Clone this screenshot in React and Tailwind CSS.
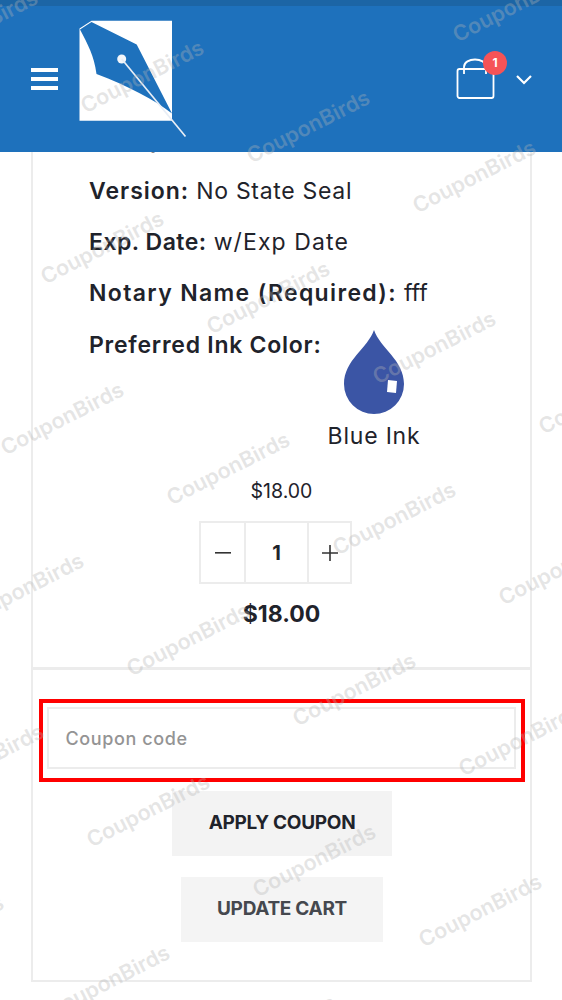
const F = { fontFamily: '"Inter","Noto Sans",sans-serif' };

const MARKS = [];
for (let i = -3; i < 6; i++) {
  for (let j = -2; j < 6; j++) {
    const x = 102 + i * 166 - j * 40;
    const y = 245 + i * 50 + j * 171;
    if (x > -90 && x < 650 && y > -40 && y < 1040) MARKS.push([x, y]);
  }
}

function Row({ label, value, labelClass, valueClass }) {
  return (
    <div className="h-[51px] flex items-center text-[23px] text-[#1f232b] whitespace-nowrap">
      <span className={"font-semibold mr-[7px] " + labelClass}>{label}</span>
      <span className={valueClass}>{value}</span>
    </div>
  );
}

export default function App() {
  return (
    <div className="relative w-[562px] h-[1000px] overflow-hidden bg-white" style={F}>
      <header className="absolute top-0 left-0 right-0 h-[152px] z-10 bg-[#1e71bc] border-t-[6px] border-[#1c65a5] flex items-center justify-between pl-[31px] pr-[29px]">
        <div className="flex items-center">
          <div className="w-[27px] flex flex-col gap-[5px] mt-[-1px]">
            <div className="h-[4px] bg-white" />
            <div className="h-[4px] bg-white" />
            <div className="h-[4px] bg-white" />
          </div>
          <svg className="ml-[21px]" width="110" height="118" viewBox="79 20 110 118">
            <path d="M79.5 28.5 L91.5 20.7 H172 V120.7 H79.5 Z" fill="#fff" />
            <path d="M80 29.5 L91.5 22 L136.7 44.5 L172 113.5 C155 100 128 86 96.5 74 C94 55 88 45 80 29.5 Z" fill="#1e71bc" />
            <circle cx="121.7" cy="59" r="4.5" fill="#f3f6fa" />
            <path d="M121.7 59 L185.5 136.5" stroke="#e8eef6" strokeWidth="1.7" fill="none" />
          </svg>
        </div>
        <div className="flex items-center">
          <div className="relative w-[40px] h-[46px] mt-[-4px]">
            <svg width="40" height="46" viewBox="0 0 40 46" fill="none" stroke="#fff" strokeWidth="1.8">
              <rect x="1.5" y="15" width="36" height="29" rx="2" />
              <path d="M8 20 V13 C8 3 30 3 30 13 V20" />
            </svg>
            <div className="absolute top-[-3px] left-[27px] w-[24px] h-[24px] rounded-full bg-[#f55357] text-white text-[12px] font-bold flex items-center justify-center">1</div>
          </div>
          <svg className="ml-[19px] mt-[2px]" width="18" height="12" viewBox="0 0 18 12" fill="none" stroke="#fff" strokeWidth="2.2">
            <path d="M2 2 L9 9 L16 2" />
          </svg>
        </div>
      </header>

      <main className="pt-[100px] pl-[31px]">
        <div className="w-[501px] h-[882px] border-x-2 border-b-2 border-[#ececec] flex flex-col">
          <div className="h-[570px] flex flex-col border-b-[3px] border-[#ececec]">
            <div className="pt-[15px] pl-[56px] flex flex-col">
              <Row label="Stamp Size:" value={'1" x 2 1/2 /'} labelClass="tracking-[1px]" valueClass="tracking-[0.7px]" />
              <Row label="Version:" value="No State Seal" labelClass="tracking-[1px]" valueClass="tracking-[0.7px]" />
              <Row label="Exp. Date:" value="w/Exp Date" labelClass="tracking-[0.5px]" valueClass="tracking-[1.1px]" />
              <Row label="Notary Name (Required):" value="fff" labelClass="tracking-[1.35px]" valueClass="tracking-[0px]" />
              <div className="flex h-[114px] text-[23px] text-[#1f232b]">
                <span className="font-semibold tracking-[0.75px] mt-[9px] whitespace-nowrap">Preferred Ink Color:</span>
              </div>
            </div>
            <div className="flex flex-col items-center relative">
              <div className="absolute left-[279px] top-[-103px] w-[124px] flex flex-col items-center">
                <svg width="60" height="84" viewBox="0 0 60 84">
                  <path d="M30 0 C36 18 60 30 60 54 A30 30 0 0 1 0 54 C0 30 24 18 30 0 Z" fill="#3b55a5" />
                  <path d="M44 50 L53 51 L52 63 L43 62 Z" fill="#fff" />
                </svg>
                <span className="text-[23px] tracking-[0.8px] text-[#1f232b] mt-[8px] leading-[28px]">Blue Ink</span>
              </div>
              <div className="mt-[46px] text-[19.5px] text-[#1f232b] leading-[24px]">$18.00</div>
              <div className="mt-[18px] mr-[12px] w-[153px] h-[63px] border-2 border-[#ececec] flex text-[#1f232b]">
                <div className="w-[43px] flex items-center justify-center">
                  <svg width="16" height="2" viewBox="0 0 16 2"><rect width="16" height="1.6" fill="#333" /></svg>
                </div>
                <div className="w-[65px] border-x-2 border-[#ececec] flex items-center justify-center font-bold text-[20px]">1</div>
                <div className="w-[41px] flex items-center justify-center">
                  <svg width="16" height="16" viewBox="0 0 16 16"><path d="M0 8 H16 M8 0 V16" stroke="#333" strokeWidth="1.6" /></svg>
                </div>
              </div>
              <div className="mt-[15px] text-[23px] font-bold text-[#1f232b] leading-[30px]">$18.00</div>
            </div>
          </div>
          <div className="px-[6px] pt-[29px] flex flex-col items-center">
            <div className="w-[486px] h-[83px] border-[4.5px] border-[#ff0000] pl-[4px] pr-[5px] pt-[4px]">
              <div className="h-[62px] border-2 border-[#ececec] flex items-center pl-[17px] text-[18px] tracking-[0.6px] font-medium text-[#949494]">Coupon code</div>
            </div>
            <div className="mt-[9px] w-[220px] h-[65px] ml-[1px] bg-[#f3f3f3] flex items-center justify-center text-[19px] font-bold text-[#1f232b] tracking-[-0.3px]">APPLY COUPON</div>
            <div className="mt-[21px] w-[202px] h-[65px] ml-[1px] bg-[#f4f4f4] flex items-center justify-center text-[19px] font-bold text-[#45484e] tracking-[-0.3px]">UPDATE CART</div>
          </div>
        </div>
      </main>

      <div className="absolute inset-0 z-20 pointer-events-none overflow-hidden">
        {MARKS.map(([x, y]) => (
          <span
            key={x + "-" + y}
            className="absolute w-[140px] text-center text-[21.5px] font-semibold whitespace-nowrap text-[#b4b4b4]/35"
            style={{ left: x - 70, top: y - 14, transform: "rotate(-27deg)" }}
          >
            CouponBirds
          </span>
        ))}
      </div>
    </div>
  );
}
